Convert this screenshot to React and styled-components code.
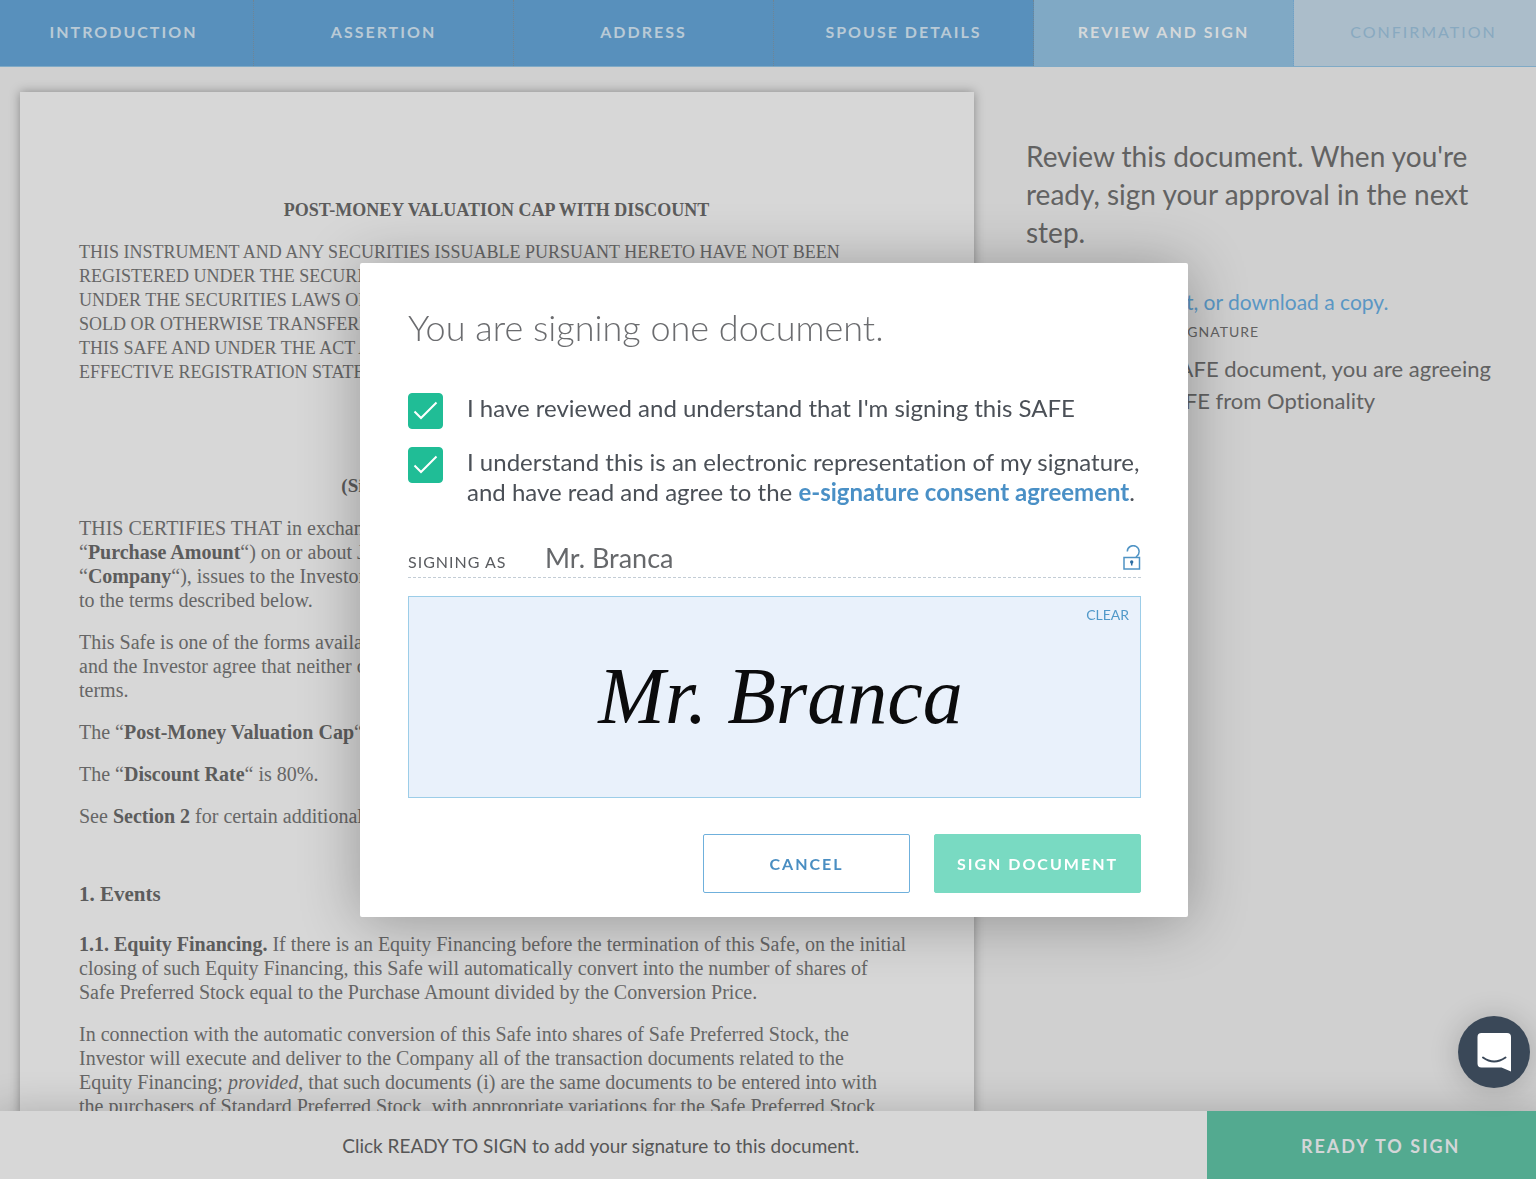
import React, { useState } from "react";
import styled, { createGlobalStyle } from "styled-components";

const sans = `Lato, "Open Sans", "Liberation Sans", sans-serif`;
const serif = `"Liberation Serif", "DejaVu Serif", serif`;

const GlobalStyle = createGlobalStyle`
  *, *::before, *::after { box-sizing: border-box; }
  body {
    margin: 0;
    background: #d0d0d0;
    font-family: ${sans};
    font-variant-ligatures: none;
    overflow: hidden;
  }
  h1, h2, h3, p { margin: 0; font-weight: 400; }
  button, input { font-family: inherit; }
`;

const Page = styled.div`
  display: grid;
  grid-template-rows: auto minmax(0, 1fr) auto;
  height: 100vh;
  margin: 0 -18px 0 -6px;
`;

const Steps = styled.nav`
  display: flex;
  border-bottom: 1px solid #7faac6;
`;

const tones = {
  done: { bg: "#5890bc", fg: "#b9cad6", line: "#6f8594" },
  current: { bg: "#80a9c5", fg: "#d4d8da", line: "#6fa0c6" },
  next: { bg: "#abbdca", fg: "#88a9c0", line: "#abbdca" },
};

const Step = styled.a`
  flex: 1;
  height: 66px;
  padding-bottom: 4px;
  display: flex;
  align-items: center;
  justify-content: center;
  background: ${(p) => tones[p.$tone].bg};
  color: ${(p) => tones[p.$tone].fg};
  border-right: 1px dotted ${(p) => tones[p.$tone].line};
  font-size: 16px;
  font-weight: ${(p) => (p.$tone === "next" ? 400 : 700)};
  letter-spacing: 2px;
  text-decoration: none;
  text-transform: uppercase;
`;

const Main = styled.main`
  display: grid;
  grid-template-columns: 49fr 29fr;
  overflow: hidden;
`;

const Sheet = styled.article`
  margin: 25px 0 0 26px;
  padding: 106px 60px 0 59px;
  background: #d7d7d7;
  box-shadow: 0 0 10px rgba(0, 0, 0, 0.35);
  color: #666;
  font-family: ${serif};
  font-size: 20px;
  line-height: 24px;
  b { color: #5c5c5c; }
`;

const SheetTitle = styled.h1`
  margin-top: ${(p) => (p.$spaced ? 90 : 0)}px;
  font-size: ${(p) => (p.$spaced ? 19 : 18)}px;
  font-weight: 700;
  text-align: center;
  color: #5c5c5c;
`;

const Clause = styled.p`
  margin-top: 18px;
  font-size: ${(p) => (p.$caps ? 18 : 20)}px;
`;

const Line = styled.span`
  display: block;
  white-space: nowrap;
`;

const SectionTitle = styled.h2`
  margin: 54px 0 26px;
  font-size: 21px;
  font-weight: 700;
  color: #5c5c5c;
`;

const Aside = styled.aside`
  padding: 70px 60px 0 52px;
  color: #626262;
  font-size: 22px;
  line-height: 32px;
`;

const AsideTitle = styled.h2`
  margin-bottom: 35px;
  font-size: 28px;
  line-height: 38px;
`;

const AsideLink = styled.a`
  display: block;
  color: #5a97c4;
  font-size: 21px;
  text-decoration: none;
  white-space: nowrap;
`;

const AsideLabel = styled.h3`
  margin-bottom: 7px;
  font-size: 14px;
  line-height: 28px;
  letter-spacing: 1px;
`;

const Footer = styled.footer`
  display: grid;
  grid-template-columns: 7fr 2fr;
  height: 68px;
  background: #d7d7d7;
  box-shadow: 0 0 40px rgba(0, 0, 0, 0.2);
  z-index: 1;
`;

const FooterNote = styled.p`
  display: flex;
  align-items: center;
  justify-content: center;
  color: #565656;
  font-size: 19px;
`;

const ReadyButton = styled.button`
  border: 0;
  padding: 2px 0 0;
  background: #53aa90;
  color: #d3d6d8;
  font-size: 18px;
  font-weight: 700;
  letter-spacing: 2px;
`;

const Overlay = styled.div`
  position: fixed;
  inset: 0 -18px 0 -6px;
  z-index: 2;
  display: flex;
  align-items: center;
  justify-content: center;
`;

const Modal = styled.form`
  width: 828px;
  max-width: 100%;
  padding: 46px 47px 24px 48px;
  border-radius: 2px;
  background: #fff;
  box-shadow: 0 4px 60px rgba(0, 0, 0, 0.3);
`;

const ModalTitle = styled.h2`
  margin-bottom: 48px;
  color: #6b6c6f;
  font-size: 36px;
  font-weight: 300;
  line-height: 36px;
`;

const CheckRow = styled.label`
  display: flex;
  align-items: flex-start;
  gap: 24px;
  margin-top: ${(p) => (p.$spaced ? 18 : 0)}px;
  color: #4b5057;
  font-size: 24px;
  line-height: 30px;
`;

const CheckCell = styled.span`
  display: grid;
  flex: none;
  width: 35px;
  height: 36px;
  > * { grid-area: 1 / 1; }
  svg { pointer-events: none; }
`;

const CheckInput = styled.input`
  appearance: none;
  margin: 0;
  border: 1px solid #20bd96;
  border-radius: 4px;
  background: #fff;
  &:checked { background: #20bd96; }
`;

const ConsentLink = styled.a`
  color: #4a90c6;
  font-weight: 700;
  text-decoration: none;
`;

const SignerRow = styled.div`
  display: flex;
  align-items: center;
  height: 38px;
  margin: 33px 0 18px;
  border-bottom: 1px dashed #c3cdd6;
`;

const SignerLabel = styled.label`
  flex: none;
  width: 137px;
  padding-top: 6px;
  color: #5a5c60;
  font-size: 16px;
  letter-spacing: 1px;
`;

const SignerInput = styled.input`
  flex: 1;
  min-width: 0;
  border: 0;
  padding: 0;
  outline: 0;
  background: none;
  color: #66686b;
  font-size: 27px;
  line-height: 36px;
`;

const SignatureBox = styled.section`
  display: flex;
  flex-direction: column;
  height: 202px;
  border: 1px solid #9ccde8;
  background: #e9f1fb;
`;

const ClearButton = styled.button`
  align-self: flex-end;
  height: 36px;
  padding: 0 11px;
  border: 0;
  background: none;
  color: #5199c9;
  font-size: 14px;
`;

const Signature = styled.p`
  margin-top: 18px;
  padding-left: 12px;
  color: #0b0b0c;
  font-family: ${serif};
  font-size: 80px;
  font-style: italic;
  line-height: 90px;
  text-align: center;
`;

const Actions = styled.div`
  display: flex;
  justify-content: flex-end;
  gap: 24px;
  margin-top: 36px;
`;

const ActionButton = styled.button`
  width: 207px;
  height: 59px;
  padding: 0;
  border: 1px solid ${(p) => (p.$primary ? "#79dac2" : "#6fb0dc")};
  border-radius: 2px;
  background: ${(p) => (p.$primary ? "#79dac2" : "#fff")};
  color: ${(p) => (p.$primary ? "#fff" : "#4a8ec2")};
  font-size: 16px;
  font-weight: 700;
  letter-spacing: 2px;
`;

const ChatButton = styled.button`
  position: fixed;
  right: 6px;
  bottom: 91px;
  z-index: 3;
  width: 72px;
  height: 72px;
  padding: 0;
  border: 0;
  border-radius: 50%;
  background: #3a4858;
  box-shadow: 0 2px 30px rgba(0, 0, 0, 0.2);
  svg { display: block; }
`;

const steps = [
  ["Introduction", "done"],
  ["Assertion", "done"],
  ["Address", "done"],
  ["Spouse Details", "done"],
  ["Review and Sign", "current"],
  ["Confirmation", "next"],
];

function Check({ id, spaced, children }) {
  const [on, setOn] = useState(true);
  return (
    <CheckRow htmlFor={id} $spaced={spaced}>
      <CheckCell>
        <CheckInput id={id} type="checkbox" checked={on} onChange={() => setOn(!on)} />
        <svg width="35" height="36" viewBox="0 0 35 36" fill="none" stroke="#fff" strokeWidth="2">
          {on && <path d="M6.5 18.5 13 25 28.5 9.5" />}
        </svg>
      </CheckCell>
      <span>{children}</span>
    </CheckRow>
  );
}

const Lines = ({ caps, rows }) => (
  <Clause $caps={caps}>
    {rows.map((row, i) => (
      <Line key={i}>{row}</Line>
    ))}
  </Clause>
);

export default function App() {
  const [name, setName] = useState("Mr. Branca");
  return (
    <>
      <GlobalStyle />
      <Page>
        <Steps>
          {steps.map(([label, tone]) => (
            <Step key={label} href="#" $tone={tone}>{label}</Step>
          ))}
        </Steps>
        <Main>
          <Sheet>
            <SheetTitle>POST-MONEY VALUATION CAP WITH DISCOUNT</SheetTitle>
            <Lines
              caps
              rows={[
                "THIS INSTRUMENT AND ANY SECURITIES ISSUABLE PURSUANT HERETO HAVE NOT BEEN",
                "REGISTERED UNDER THE SECURITIES ACT",
                "UNDER THE SECURITIES LAWS OF STATES",
                "SOLD OR OTHERWISE TRANSFERRED",
                "THIS SAFE AND UNDER THE ACT AND",
                "EFFECTIVE REGISTRATION STATEMENT",
              ]}
            />
            <SheetTitle $spaced>(Simple Agreement for Future Equity)</SheetTitle>
            <Lines
              rows={[
                "THIS CERTIFIES THAT in exchange",
                <>“<b>Purchase Amount</b>“) on or about June</>,
                <>“<b>Company</b>“), issues to the Investor</>,
                "to the terms described below.",
              ]}
            />
            <Lines
              rows={[
                "This Safe is one of the forms available",
                "and the Investor agree that neither one",
                "terms.",
              ]}
            />
            <Lines rows={[<>The “<b>Post-Money Valuation Cap</b>“ is</>]} />
            <Lines rows={[<>The “<b>Discount Rate</b>“ is 80%.</>]} />
            <Lines rows={[<>See <b>Section 2</b> for certain additional</>]} />
            <SectionTitle>1. Events</SectionTitle>
            <Lines
              rows={[
                <><b>1.1. Equity Financing.</b> If there is an Equity Financing before the termination of this Safe, on the initial</>,
                "closing of such Equity Financing, this Safe will automatically convert into the number of shares of",
                "Safe Preferred Stock equal to the Purchase Amount divided by the Conversion Price.",
              ]}
            />
            <Lines
              rows={[
                "In connection with the automatic conversion of this Safe into shares of Safe Preferred Stock, the",
                "Investor will execute and deliver to the Company all of the transaction documents related to the",
                <>Equity Financing; <i>provided</i>, that such documents (i) are the same documents to be entered into with</>,
                "the purchasers of Standard Preferred Stock, with appropriate variations for the Safe Preferred Stock",
              ]}
            />
          </Sheet>
          <Aside>
            <AsideTitle>Review this document. When you're ready, sign your approval in the next step.</AsideTitle>
            <AsideLink href="#">See the document, or download a copy.</AsideLink>
            <AsideLabel>ABOUT YOUR OWN SIGNATURE</AsideLabel>
            <Line>By signing the SAFE document, you are agreeing</Line>
            <Line>to accept the SAFE from Optionality</Line>
          </Aside>
        </Main>
        <Footer>
          <FooterNote>Click READY TO SIGN to add your signature to this document.</FooterNote>
          <ReadyButton type="button">READY TO SIGN</ReadyButton>
        </Footer>
      </Page>

      <Overlay>
        <Modal role="dialog" aria-labelledby="sign-title" onSubmit={(e) => e.preventDefault()}>
          <ModalTitle id="sign-title">You are signing one document.</ModalTitle>
          <Check id="reviewed">I have reviewed and understand that I'm signing this SAFE</Check>
          <Check id="consent" spaced>
            <Line>I understand this is an electronic representation of my signature,</Line>
            <Line>
              and have read and agree to the{" "}
              <ConsentLink href="#">e-signature consent agreement</ConsentLink>.
            </Line>
          </Check>
          <SignerRow>
            <SignerLabel htmlFor="signer">SIGNING AS</SignerLabel>
            <SignerInput id="signer" value={name} onChange={(e) => setName(e.target.value)} />
            <svg width="18" height="26" viewBox="0 0 18 26" fill="none" stroke="#4f93c4" strokeWidth="1.5">
              <rect x="1" y="12.5" width="15.5" height="11.5" />
              <path d="M4.3 6.5A5.9 5.9 0 1 1 13.5 11.5V12.5" />
              <circle cx="8.7" cy="17" r="1.7" fill="#2c6da3" stroke="none" />
              <path d="M8.7 17v3.5" stroke="#2c6da3" />
            </svg>
          </SignerRow>
          <SignatureBox aria-label="Signature">
            <ClearButton type="button" onClick={() => setName("")}>CLEAR</ClearButton>
            <Signature>{name}</Signature>
          </SignatureBox>
          <Actions>
            <ActionButton type="button">CANCEL</ActionButton>
            <ActionButton type="submit" $primary>SIGN DOCUMENT</ActionButton>
          </Actions>
        </Modal>
      </Overlay>

      <ChatButton type="button" aria-label="Open chat">
        <svg width="72" height="72" viewBox="0 0 72 72">
          <path d="M23.5 17h25.5a4 4 0 0 1 4 4v34.5l-9.5-4H23.5a4 4 0 0 1-4-4V21a4 4 0 0 1 4-4z" fill="#fff" />
          <path d="M25 41.5q11 8 22.5 0" fill="none" stroke="#3a4858" strokeWidth="2" strokeLinecap="round" />
        </svg>
      </ChatButton>
    </>
  );
}
